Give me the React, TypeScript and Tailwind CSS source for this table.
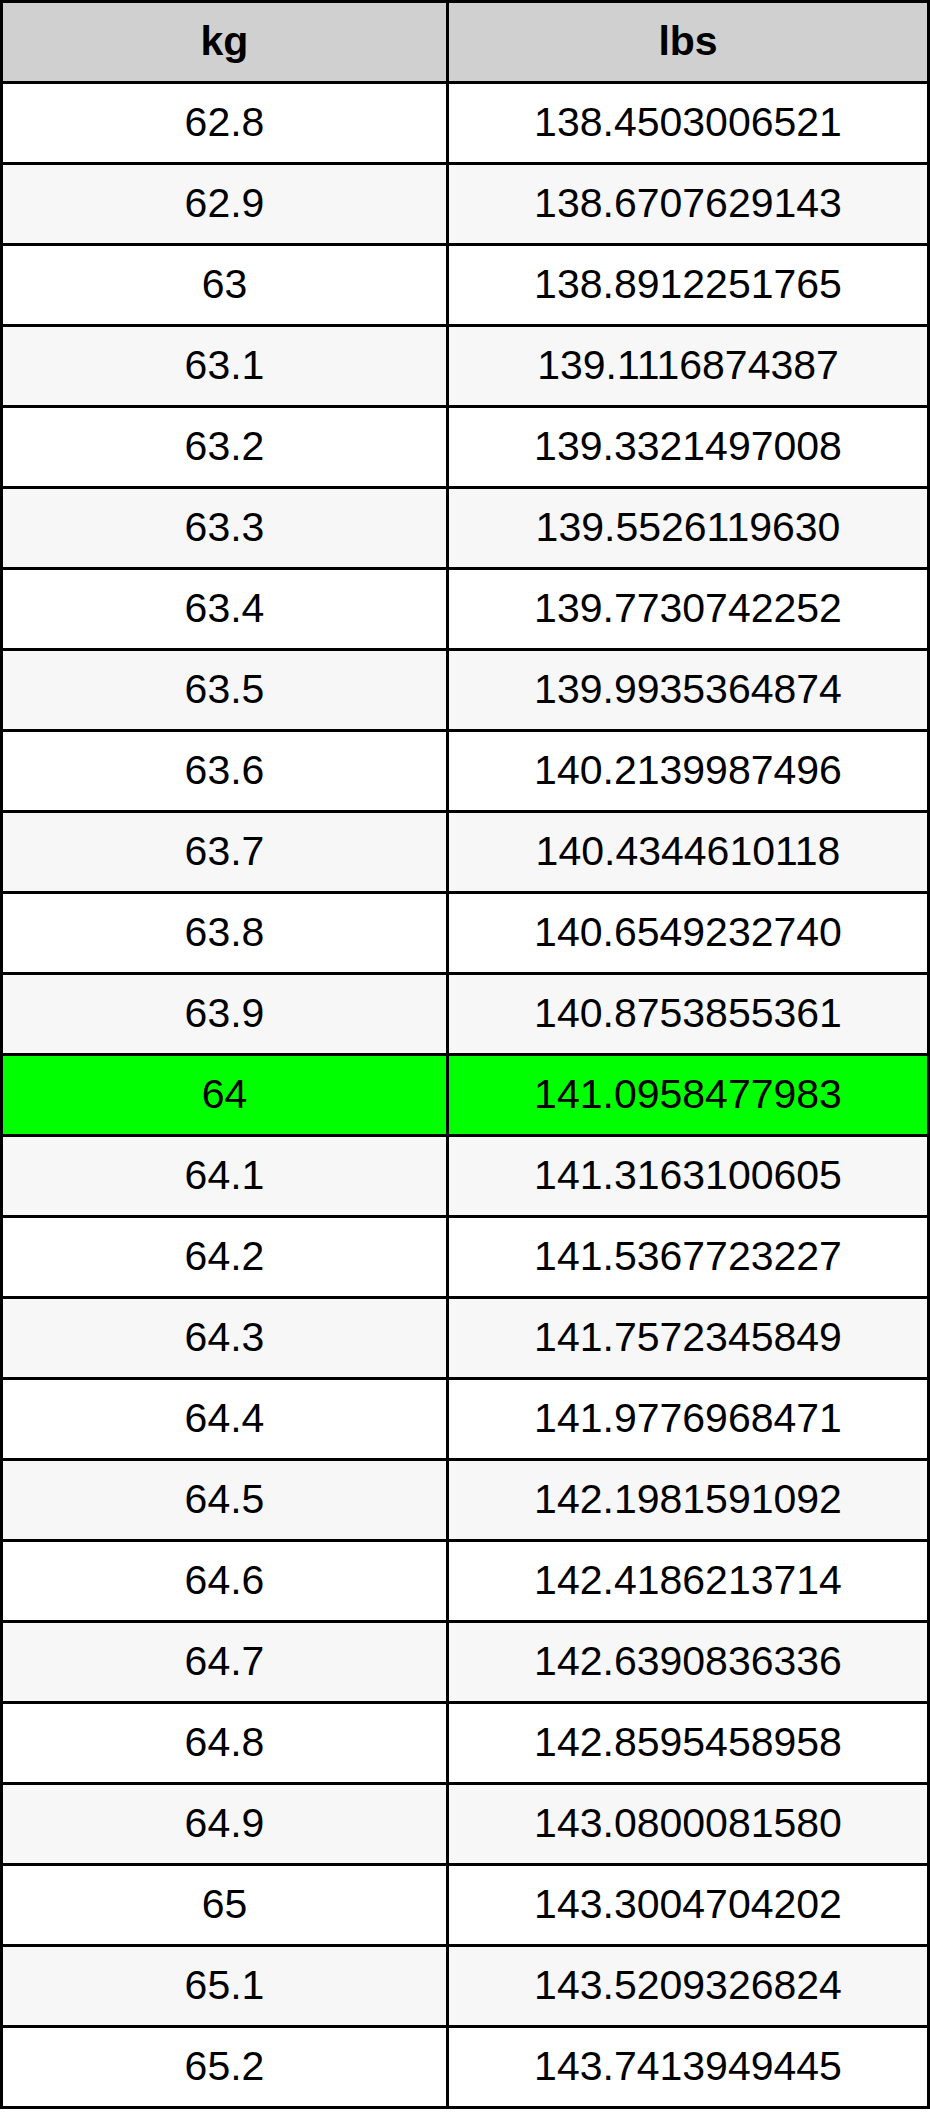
const rows: [string, string][] = [
  ["62.8", "138.4503006521"],
  ["62.9", "138.6707629143"],
  ["63", "138.8912251765"],
  ["63.1", "139.1116874387"],
  ["63.2", "139.3321497008"],
  ["63.3", "139.5526119630"],
  ["63.4", "139.7730742252"],
  ["63.5", "139.9935364874"],
  ["63.6", "140.2139987496"],
  ["63.7", "140.4344610118"],
  ["63.8", "140.6549232740"],
  ["63.9", "140.8753855361"],
  ["64", "141.0958477983"],
  ["64.1", "141.3163100605"],
  ["64.2", "141.5367723227"],
  ["64.3", "141.7572345849"],
  ["64.4", "141.9776968471"],
  ["64.5", "142.1981591092"],
  ["64.6", "142.4186213714"],
  ["64.7", "142.6390836336"],
  ["64.8", "142.8595458958"],
  ["64.9", "143.0800081580"],
  ["65", "143.3004704202"],
  ["65.1", "143.5209326824"],
  ["65.2", "143.7413949445"],
];

export default function App() {
  return (
    <div className="bg-white w-[930px] min-h-[2115px] font-['Liberation_Sans',Arial,sans-serif] text-black">
      <div className="w-[930px] border-[3px] border-black">
        {/* header */}
        <div className="grid grid-cols-[446px_1fr] h-[78px] bg-[#d0d0d0] text-[41px] font-bold">
          <div className="flex items-center justify-center border-r-[3px] border-black">kg</div>
          <div className="flex items-center justify-center">lbs</div>
        </div>

        {rows.map(([kg, lbs], i) => {
          const bg = kg === "64" ? "bg-[#00ff00]" : i % 2 === 1 ? "bg-[#f7f7f7]" : "bg-white";
          return (
            <div
              key={kg}
              className={`grid grid-cols-[446px_1fr] h-[81px] border-t-[3px] border-black text-[41px] ${bg}`}
            >
              <div className="flex items-center justify-center border-r-[3px] border-black">{kg}</div>
              <div className="flex items-center justify-center">{lbs}</div>
            </div>
          );
        })}
      </div>
    </div>
  );
}
